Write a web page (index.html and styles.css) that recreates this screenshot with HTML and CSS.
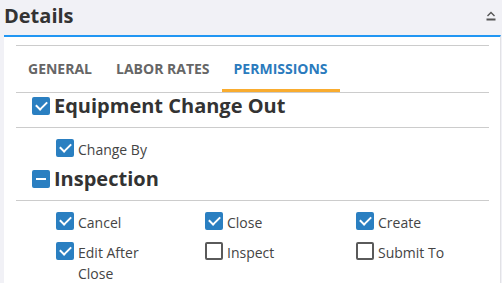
FILE: index.html
```html
<!DOCTYPE html>
<html lang="en">

<head>
    <meta charset="utf-8">
    <title>Details</title>
    <link rel="stylesheet" href="styles.css">
</head>

<body>
    <div class="kop">
        <h1>Details</h1>
        <svg class="fold" width="10" height="10" viewBox="0 0 10 10">
            <path d="M1.5 5 L5 1.5 L8.5 5" fill="none" stroke="#555" stroke-width="1.4"/>
            <rect x="0.5" y="7.5" width="9" height="2" fill="#555"/>
        </svg>
    </div>

    <div class="panel">
        <nav class="tabs">
            <span class="tab">General</span>
            <span class="tab">Labor Rates</span>
            <span class="tab valgt">Permissions</span>
        </nav>

        <div class="gruppe">
            <span class="box tjek"></span>
            <h2>Equipment Change Out</h2>
        </div>
        <div class="liste">
            <div class="perm"><span class="box tjek"></span><span>Change By</span></div>
        </div>

        <div class="gruppe">
            <span class="box minus"></span>
            <h2>Inspection</h2>
        </div>
        <div class="liste grid">
            <div class="perm"><span class="box tjek"></span><span>Cancel</span></div>
            <div class="perm"><span class="box tjek"></span><span>Close</span></div>
            <div class="perm"><span class="box tjek"></span><span>Create</span></div>
            <div class="perm"><span class="box tjek"></span><span>Edit After Close</span></div>
            <div class="perm"><span class="box"></span><span>Inspect</span></div>
            <div class="perm"><span class="box"></span><span>Submit To</span></div>
        </div>
    </div>
</body>

</html>
```

FILE: styles.css
```css
body {
    margin: 0;
    background-color: #f1f1f6;
    font-family: "Open Sans", sans-serif;
    color: #333;
    overflow: hidden;
}

.kop {
    display: flex;
    align-items: center;
    justify-content: space-between;
    height: 35px;
    padding: 0 6px 0 4px;
}

h1 {
    margin: 0;
    font-size: 20px;
    font-weight: 700;
    line-height: 28px;
    margin-top: -3px;
}

.fold {
    margin-top: -3px;
}

.panel {
    background: white;
    margin: 0 1px 0 4px;
    border-top: 2px solid #2196f3;
    border-right: 1px solid #e2e2e6;
    padding: 0 11px 0 12px;
    height: calc(100vh - 37px);
    overflow: hidden;
}

.tabs {
    display: flex;
    margin-top: 8px;
    border-top: 1px solid #ccc;
    border-bottom: 1px solid #ccc;
}

.tab {
    padding: 13px 12px 11px;
    line-height: 19px;
    font-size: 14px;
    font-weight: 700;
    text-transform: uppercase;
    color: #666;
    border-bottom: 3px solid transparent;
}

.tab.valgt {
    color: #2b7bbd;
    border-bottom-color: #f9ac2f;
}

.gruppe {
    display: flex;
    align-items: center;
    gap: 4px;
    padding: 0 0 8px 16px;
    border-bottom: 1px solid #ccc;
}

h2 {
    margin: 0;
    font-size: 20px;
    font-weight: 700;
    line-height: 26px;
}

.liste {
    padding: 11px 0 6px 40px;
}

.grid {
    display: grid;
    grid-template-columns: 149px 151px 130px;
    row-gap: 9px;
}

.perm {
    display: flex;
    align-items: flex-start;
    gap: 4px;
    font-size: 14px;
    line-height: 21px;
    color: #444;
}

.grid .perm {
    padding-right: 40px;
}

.box {
    flex: none;
    width: 18px;
    height: 18px;
    box-sizing: border-box;
    border: 2px solid #5a5a5a;
    border-radius: 2px;
    background: white;
    position: relative;
}

.box.tjek,
.box.minus {
    background: #2a7fc1;
    border-color: #2a7fc1;
}

.box.tjek::after {
    content: "";
    position: absolute;
    left: 4px;
    top: 0px;
    width: 5px;
    height: 9px;
    border: solid white;
    border-width: 0 2px 2px 0;
    transform: rotate(45deg);
}

.box.minus::after {
    content: "";
    position: absolute;
    left: 2px;
    top: 6px;
    width: 10px;
    height: 2px;
    background: white;
}
```
